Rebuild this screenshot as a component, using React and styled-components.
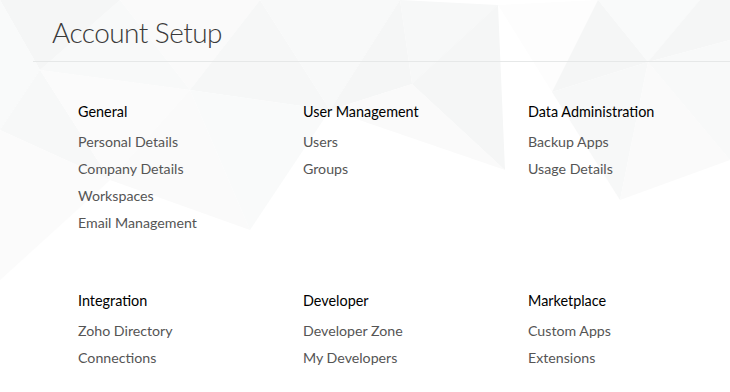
import React from "react";
import styled, { createGlobalStyle } from "styled-components";

const sections = [
  [
    { title: "General", links: ["Personal Details", "Company Details", "Workspaces", "Email Management"] },
    { title: "User Management", links: ["Users", "Groups"] },
    { title: "Data Administration", links: ["Backup Apps", "Usage Details"] },
  ],
  [
    { title: "Integration", links: ["Zoho Directory", "Connections"] },
    { title: "Developer", links: ["Developer Zone", "My Developers"] },
    { title: "Marketplace", links: ["Custom Apps", "Extensions"] },
  ],
];

// faint low-poly backdrop
const shards = [
  ["0,0 120,0 40,70", "#f5f6f6"],
  ["40,70 120,0 190,90", "#f8f9f9"],
  ["0,0 40,70 0,130", "#f9fafa"],
  ["0,130 40,70 110,180", "#f7f8f8"],
  ["120,0 260,0 190,90", "#fafafa"],
  ["190,90 260,0 330,110", "#f6f7f7"],
  ["260,0 400,0 330,110", "#f8f9f9"],
  ["330,110 400,0 412,84", "#f5f6f6"],
  ["400,0 498,5 412,84", "#f7f8f8"],
  ["412,84 498,5 505,170", "#f5f6f6"],
  ["498,5 598,0 552,92", "#fdfdfd"],
  ["598,0 648,62 552,92", "#f5f6f6"],
  ["598,0 700,0 648,62", "#f9fafa"],
  ["700,0 730,0 730,40 648,62", "#f5f6f6"],
  ["648,62 730,40 730,160", "#f8f9f9"],
  ["552,92 648,62 620,200", "#f7f8f8"],
  ["648,62 730,160 620,200", "#fafafa"],
  ["110,180 190,90 250,230", "#fafafa"],
  ["40,70 190,90 110,180", "#fbfbfb"],
  ["190,90 330,110 250,230", "#f9fafa"],
  ["330,110 412,84 505,170", "#fafafa"],
  ["0,130 110,180 0,280", "#fbfbfb"],
];

export default function App() {
  return (
    <>
      <GlobalStyle />
      <Page>
        <Backdrop viewBox="0 0 730 392" preserveAspectRatio="none">
          {shards.map(([pts, fill], i) => (
            <polygon key={i} points={pts} fill={fill} />
          ))}
        </Backdrop>
        <Header>
          <Title>Account Setup</Title>
        </Header>
        <Divider />
        <Sections>
          {sections.map((row, r) => (
            <Row key={r}>
              {row.map((col) => (
                <Column key={col.title}>
                  <Heading>{col.title}</Heading>
                  {col.links.map((l) => (
                    <LinkItem key={l} href="#">{l}</LinkItem>
                  ))}
                </Column>
              ))}
            </Row>
          ))}
        </Sections>
      </Page>
    </>
  );
}

const GlobalStyle = createGlobalStyle`
  body {
    margin: 0;
    background: #fff;
    font-family: Lato, "Open Sans", sans-serif;
  }
`;

const Page = styled.div`
  position: relative;
  width: 730px;
  height: 392px;
  overflow: hidden;
`;

const Backdrop = styled.svg`
  position: absolute;
  inset: 0;
  width: 100%;
  height: 100%;
  z-index: 0;
`;

const Header = styled.div`
  position: relative;
  padding: 15px 0 0 52px;
  height: 46px;
`;

const Title = styled.h1`
  margin: 0;
  font-family: Lato, sans-serif;
  font-weight: 300;
  font-size: 28px;
  line-height: 34px;
  color: #3a3a3a;
  letter-spacing: -0.55px;
`;

const Divider = styled.div`
  position: relative;
  margin-left: 33px;
  height: 1px;
  background: #e6e8e8;
`;

const Sections = styled.div`
  position: relative;
  padding: 39px 0 0 78px;
  display: flex;
  flex-direction: column;
  gap: 54px;
`;

const Row = styled.div`
  display: grid;
  grid-template-columns: 225px 225px 225px;
`;

const Column = styled.div`
  display: flex;
  flex-direction: column;
`;

const Heading = styled.div`
  font-size: 14.4px;
  line-height: 20px;
  color: #000;
  margin: 1px 0 6px;
`;

const LinkItem = styled.a`
  font-size: 14.2px;
  line-height: 27px;
  color: #555;
  text-decoration: none;
`;
